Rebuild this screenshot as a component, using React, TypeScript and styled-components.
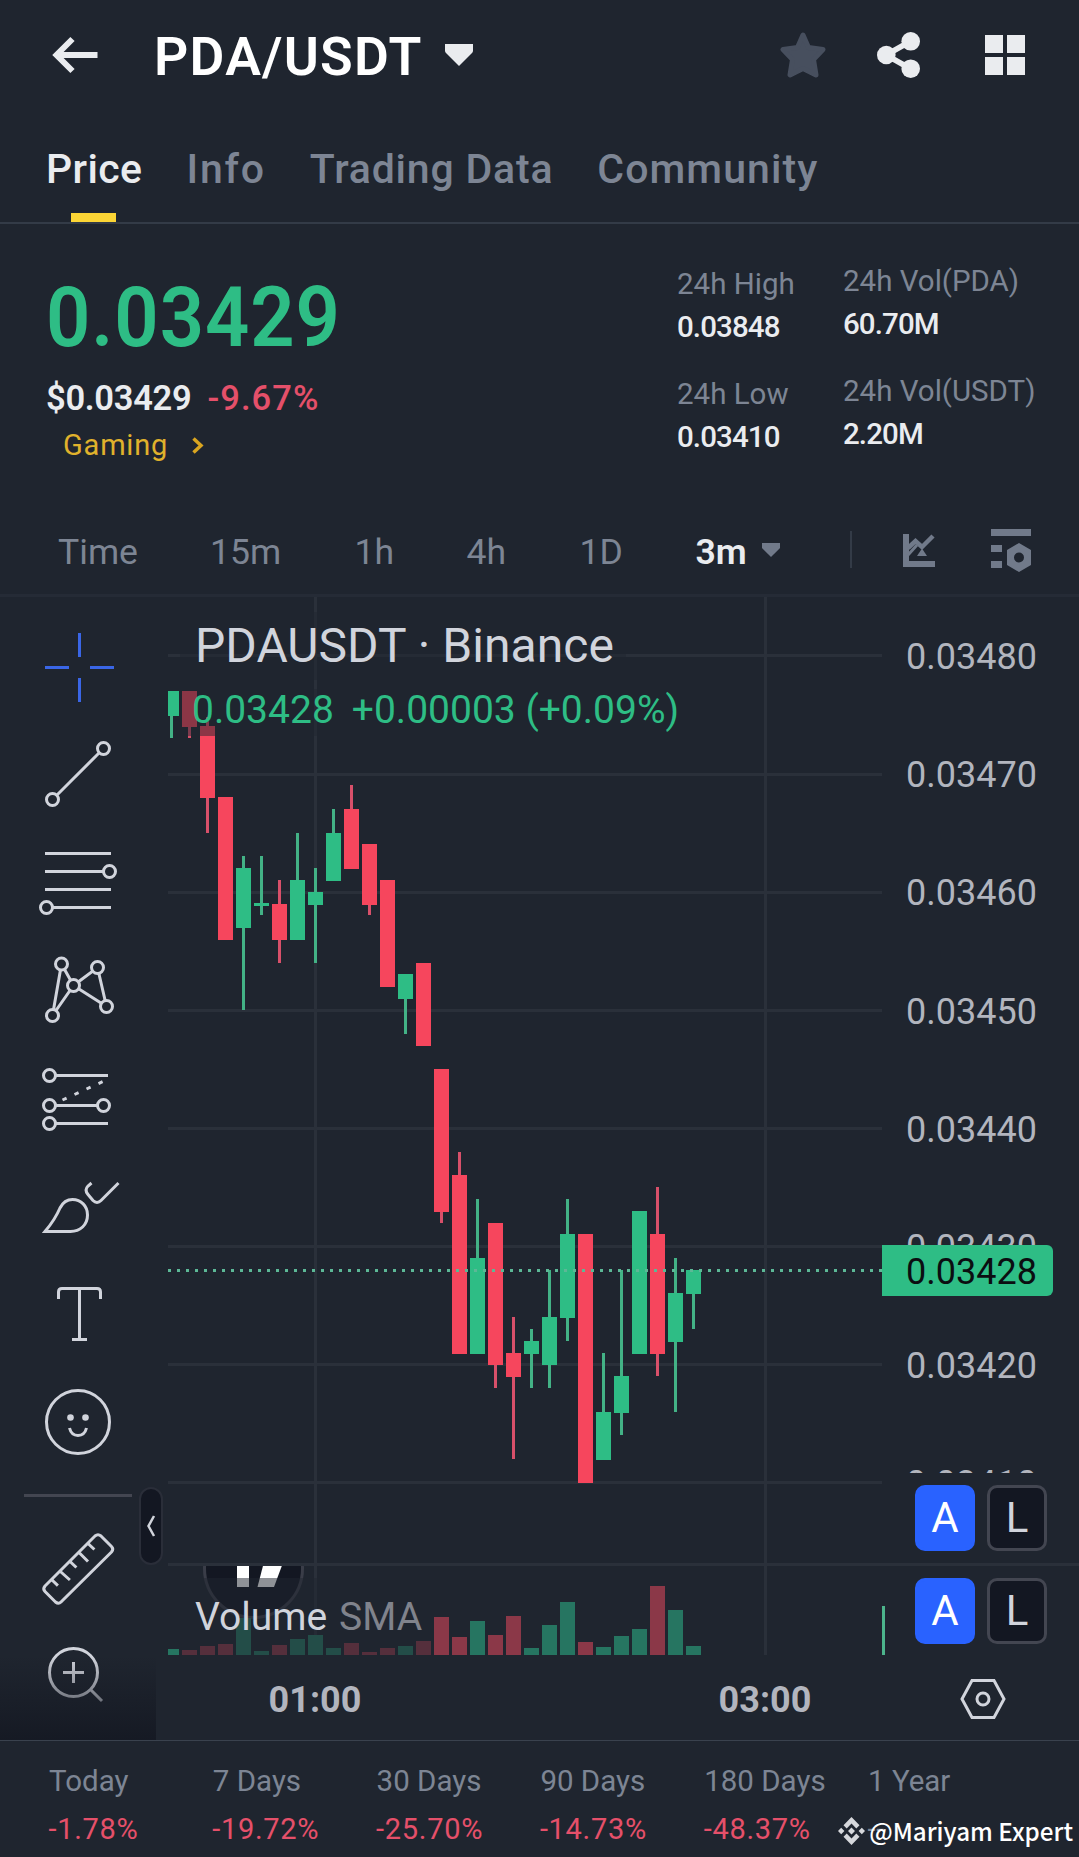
import React from "react";
import styled, { createGlobalStyle } from "styled-components";

const c = {
  bg: "#1f252f",
  line: "#333b47",
  grid: "#2a303a",
  muted: "#7d8594",
  text: "#eaecef",
  green: "#2ebd85",
  red: "#f6465d",
  redText: "#e5506a",
  icon: "#d1d4dc",
  axis: "#b2b5be",
  blue: "#2962ff",
  dark: "#131722",
};

const Global = createGlobalStyle`
  * { box-sizing: border-box; }
  body { margin: 0; background: ${c.bg}; }
`;

const Page = styled.div`
  width: 1079px;
  height: 1857px;
  overflow: hidden;
  background: ${c.bg};
  color: ${c.text};
  font-family: Roboto, "Liberation Sans", sans-serif;
  display: flex;
  flex-direction: column;
`;

/* ---------- header ---------- */
const Header = styled.header`
  height: 110px;
  display: flex;
  align-items: center;
  padding: 0 53px 0 52px;
`;
const Title = styled.h1`
  margin: 3px 0 0 56px;
  font-size: 53.5px;
  line-height: 60px;
  font-weight: 600;
  letter-spacing: 1.25px;
  color: #fff;
`;
const CaretBox = styled.span`
  display: flex;
  margin-left: 22px;
`;
const HeaderActions = styled.div`
  margin-left: auto;
  display: flex;
  align-items: center;
`;
const ActionSlot = styled.span<{ $gap: number }>`
  display: flex;
  margin-left: ${(p) => p.$gap}px;
  margin-top: -1px;
`;

/* ---------- tabs ---------- */
const Tabs = styled.nav`
  height: 114px;
  display: flex;
  gap: 44px;
  padding: 0 46px;
  border-bottom: 2px solid ${c.line};
`;
const Tab = styled.span<{ $active?: boolean; $ls?: number }>`
  position: relative;
  padding-top: 35px;
  font-size: 41px;
  line-height: 48px;
  font-weight: 500;
  letter-spacing: ${(p) => p.$ls ?? 0.4}px;
  color: ${(p) => (p.$active ? c.text : c.muted)};
  &::after {
    content: "";
    display: ${(p) => (p.$active ? "block" : "none")};
    position: absolute;
    left: calc(50% - 23px);
    bottom: 0;
    width: 45px;
    height: 9px;
    background: #fcd535;
  }
`;

/* ---------- summary ---------- */
const Summary = styled.section`
  height: 286px;
  display: flex;
  justify-content: space-between;
`;
const PriceCol = styled.div`
  padding: 52px 0 0 46px;
`;
const LastPrice = styled.div`
  font-size: 84px;
  line-height: 84px;
  font-weight: 600;
  letter-spacing: 1px;
  color: ${c.green};
  transform: scaleX(0.925);
  transform-origin: left;
`;
const SubRow = styled.div`
  display: flex;
  gap: 16px;
  margin-top: 18px;
  font-size: 34.5px;
  line-height: 40px;
  font-weight: 500;
`;
const Fiat = styled.span`
  font-weight: 600;
  letter-spacing: -0.3px;
`;
const Change = styled.span`
  color: ${c.redText};
  letter-spacing: 1.1px;
`;
const Category = styled.div`
  display: flex;
  align-items: center;
  gap: 24px;
  margin: 10px 0 0 17px;
  font-size: 29px;
  line-height: 34px;
  letter-spacing: 0.8px;
  color: #e0b22c;
`;
const Stats = styled.div`
  width: 402px;
  padding-top: 43px;
  display: grid;
  grid-template-columns: 166px auto;
`;
const StatCol = styled.dl<{ $lift?: boolean }>`
  margin: ${(p) => (p.$lift ? "-3.5px" : "0")} 0 0;
  font-size: 29.5px;
  line-height: 34px;
`;
const StatLabel = styled.dt`
  color: ${c.muted};
  white-space: nowrap;
`;
const StatValue = styled.dd`
  margin: 9px 0 33px;
  font-weight: 500;
  letter-spacing: -0.9px;
`;

/* ---------- interval bar ---------- */
const Intervals = styled.nav`
  height: 84px;
  padding: 0 46px 0 58px;
  display: grid;
  grid-template-columns: 152px 144.5px 112px 113px 116px 154.5px 53px 88px 40px;
  align-items: center;
  font-size: 35.6px;
  line-height: 42px;
  color: ${c.muted};
  & > svg {
    margin-top: -4px;
  }
`;
const ActiveInterval = styled.span`
  display: flex;
  align-items: center;
  gap: 15px;
  font-weight: 600;
  color: ${c.text};
  & > svg {
    margin-top: -4px;
  }
`;
const Divider = styled.i`
  width: 2px;
  height: 37px;
  margin-top: -5px;
  background: ${c.line};
`;

/* ---------- chart ---------- */
const ChartArea = styled.section`
  height: 1146px;
  display: grid;
  grid-template-columns: 168px 714px 197px;
  border-top: 3px solid #252b36;
`;
const Toolbar = styled.aside`
  position: relative;
  padding-top: 17px;
  display: flex;
  flex-direction: column;
  &::after {
    content: "";
    position: absolute;
    left: 0;
    bottom: 0;
    width: 156px;
    height: 84px;
    background: linear-gradient(rgba(24, 28, 38, 0), rgba(21, 25, 35, 0.95));
  }
`;
const ToolRule = styled.i`
  width: 108px;
  height: 3px;
  margin: 16px 0 18px 24px;
  background: #434651;
`;
const Collapse = styled.button`
  position: absolute;
  left: 139px;
  top: 890px;
  width: 24px;
  height: 78px;
  padding: 0;
  border: 2px solid #2a2e39;
  border-radius: 12px;
  background: ${c.dark};
  display: flex;
  align-items: center;
  justify-content: center;
`;
const Plot = styled.div`
  position: relative;
  display: flex;
  flex-direction: column;
`;
const Legend = styled.div<{ $top: number; $w: number; $h: number }>`
  position: absolute;
  left: 12px;
  top: ${(p) => p.$top}px;
  width: ${(p) => p.$w}px;
  height: ${(p) => p.$h}px;
  background: rgba(31, 37, 47, 0.5);
  white-space: nowrap;
`;
const SymbolName = styled.div`
  padding-left: 15px;
  font-size: 48px;
  line-height: 68px;
  letter-spacing: 0.05px;
  color: ${c.icon};
`;
const Quote = styled.div`
  display: flex;
  padding-left: 12px;
  font-size: 39px;
  line-height: 43px;
  color: ${c.green};
  gap: 18px;
`;
const VolumeName = styled.div`
  display: flex;
  gap: 12px;
  padding-left: 15px;
  font-size: 39px;
  line-height: 79px;
  color: ${c.icon};
`;
const Faded = styled.span`
  color: #80838c;
`;
const TimeAxis = styled.div`
  display: grid;
  grid-template-columns: 294px 606px;
  text-align: center;
  padding-top: 22px;
  font-size: 36px;
  line-height: 46px;
  font-weight: 700;
  color: ${c.axis};
`;
const Axis = styled.div`
  position: relative;
  display: flex;
  flex-direction: column;
`;
const AxisLabels = styled.ul`
  margin: 0;
  padding: 1px 0 0 24px;
  height: 876px;
  overflow: hidden;
  list-style: none;
  font-size: 36px;
  color: ${c.axis};
`;
const AxisLabel = styled.li`
  height: 118.2px;
  line-height: 118.2px;
`;
const PriceTag = styled.div`
  position: absolute;
  left: 0;
  top: 648px;
  width: 171px;
  height: 51px;
  padding-left: 24px;
  border-radius: 0 6px 6px 0;
  background: ${c.green};
  color: #0b0e11;
  font-size: 36px;
  line-height: 54px;
`;
const ScaleRow = styled.div<{ $mt: number }>`
  display: flex;
  gap: 12px;
  margin: ${(p) => p.$mt}px 0 0 33px;
`;
const ScaleButton = styled.button<{ $on?: boolean }>`
  width: 60px;
  height: 66px;
  padding: 0;
  border: 3px solid ${(p) => (p.$on ? c.blue : "#434651")};
  border-radius: 10px;
  background: ${(p) => (p.$on ? c.blue : c.dark)};
  color: ${(p) => (p.$on ? "#fff" : c.icon)};
  font-family: inherit;
  font-size: 42px;
  line-height: 58px;
`;
const PaneRule = styled.i`
  height: 3px;
  margin-top: 12px;
  background: ${c.grid};
`;
const LastVolume = styled.i`
  position: absolute;
  left: 0;
  top: 1009px;
  width: 3px;
  height: 49px;
  background: #4cb48c;
`;
const AxisSettings = styled.div`
  margin: 35px 0 0 78px;
  display: flex;
`;

/* ---------- footer ---------- */
const Footer = styled.footer`
  position: relative;
  flex: 1;
  border-top: 1px solid #3a424e;
  padding: 23px 0 0 49px;
  display: grid;
  grid-template-columns: repeat(5, 163.8px) auto;
  font-size: 29.5px;
  line-height: 34px;
`;
const Period = styled.div`
  white-space: nowrap;
  color: ${c.muted};
`;
const PeriodChange = styled.div<{ $none?: boolean }>`
  margin: 14px 0 0 -0.5px;
  font-size: 29px;
  letter-spacing: 0.7px;
  color: ${(p) => (p.$none ? c.muted : c.redText)};
`;
const Watermark = styled.div`
  position: absolute;
  right: 6px;
  bottom: 8px;
  display: flex;
  align-items: center;
  gap: 4px;
  font-family: "Noto Sans CJK SC", "Noto Sans", sans-serif;
  font-size: 24.2px;
  line-height: 36px;
  font-weight: 500;
  color: #fff;
`;

/* ---------- icons ---------- */
const Caret = ({ w, h, fill }: { w: number; h: number; fill: string }) => (
  <svg width={w} height={h} viewBox="0 0 28 22" preserveAspectRatio="none">
    <path d="M0 0H28V6.500Q28 8 27 9L14 22L1 9Q0 8 0 6.500Z" fill={fill} />
  </svg>
);

const Tool = ({ top, children }: { top: number; children: React.ReactNode }) => (
  <svg width="156" height="108" viewBox={`0 ${top} 156 108`} fill="none" stroke={c.icon} strokeWidth="3">
    {children}
  </svg>
);

const Dots = ({ at }: { at: [number, number][] }) => (
  <>
    {at.map(([x, y]) => (
      <circle key={`${x}-${y}`} cx={x} cy={y} r="6" fill={c.bg} />
    ))}
  </>
);

/* ---------- chart data: [up, high, bodyTop, bodyBottom, low, volumeTop] ---------- */
const bars: [number, number, number, number, number, number][] = [
  [1, 691, 691, 716, 738, 1649],
  [0, 691, 691, 727, 738, 1650],
  [0, 717, 726, 798, 833, 1646],
  [0, 797, 797, 940, 940, 1644],
  [1, 856, 868, 928, 1010, 1618],
  [1, 856, 903, 906, 915, 1651],
  [0, 880, 904, 940, 963, 1645],
  [1, 833, 880, 940, 940, 1639],
  [1, 868, 892, 905, 963, 1635],
  [1, 809, 833, 881, 881, 1648],
  [0, 785, 809, 869, 869, 1643],
  [0, 844, 844, 905, 915, 1652],
  [0, 880, 880, 987, 987, 1648],
  [1, 974, 974, 999, 1034, 1646],
  [0, 963, 963, 1046, 1046, 1641],
  [0, 1069, 1069, 1212, 1223, 1617],
  [0, 1152, 1175, 1354, 1354, 1637],
  [1, 1199, 1258, 1354, 1354, 1621],
  [0, 1223, 1223, 1365, 1388, 1635],
  [0, 1317, 1353, 1377, 1459, 1616],
  [1, 1329, 1341, 1354, 1388, 1648],
  [1, 1270, 1317, 1365, 1388, 1625],
  [1, 1199, 1234, 1318, 1341, 1602],
  [0, 1234, 1234, 1483, 1483, 1642],
  [1, 1353, 1412, 1460, 1460, 1647],
  [1, 1270, 1376, 1413, 1435, 1636],
  [1, 1211, 1211, 1354, 1354, 1629],
  [0, 1187, 1234, 1354, 1376, 1586],
  [1, 1258, 1293, 1342, 1412, 1610],
  [1, 1270, 1270, 1294, 1329, 1646],
];
const gridY = [654, 773, 891, 1009, 1127, 1245, 1363, 1481];
const prices = ["0.03480", "0.03470", "0.03460", "0.03450", "0.03440", "0.03430", "0.03420", "0.03410"];

const Chart = () => (
  <svg width="714" height="1058" viewBox="168 597 714 1058" shapeRendering="crispEdges">
    {gridY.map((y) => (
      <rect key={y} x="168" y={y} width="714" height="3" fill={c.grid} />
    ))}
    <rect x="168" y="1563" width="714" height="3" fill={c.grid} />
    {[314, 764].map((x) => (
      <rect key={x} x={x} y="597" width="3" height="1058" fill={c.grid} />
    ))}
    <svg x="168" y="1566" width="714" height="89" viewBox="168 1566 714 89">
      <circle cx="253.500" cy="1568.500" r="49" fill={c.dark} stroke="#3a3d48" strokeWidth="3" shapeRendering="auto" />
      <rect x="237" y="1560" width="12" height="27" fill="#fff" />
      <path d="M264.500 1560H284L274 1587H257.500Z" fill="#fff" shapeRendering="auto" />
    </svg>
    {bars.map(([up, high, top, bottom, low, vol], i) => {
      const x = 164 + i * 18;
      return (
        <g key={i}>
          <rect x={x} y={vol} width="15" height={1655 - vol} fill={up ? "#267561" : "#8b3848"} />
          <rect x={x + 6} y={high} width="3" height={low - high} fill={up ? "#43b286" : "#d8506a"} />
          <rect x={x} y={top} width="15" height={bottom - top} fill={up ? c.green : c.red} />
        </g>
      );
    })}
    <path d="M168 1270.500H882" stroke="#5cb896" strokeWidth="3" strokeDasharray="3 6" />
  </svg>
);

const Binance = () => (
  <svg width="27" height="28" viewBox="0 0 27 28" fill="#d6d8dc">
    <path d="M13.500 0L21.500 8.200L18.300 11.400L13.500 6.500L8.700 11.400L5.500 8.200Z" />
    <path d="M13.500 28L21.500 19.800L18.300 16.600L13.500 21.500L8.700 16.600L5.500 19.800Z" />
    <path d="M3.200 10.800L6.400 14L3.200 17.200L0 14ZM23.800 10.800L27 14L23.800 17.200L20.600 14ZM13.500 10.500L17 14L13.500 17.500L10 14Z" />
  </svg>
);

const periods = [
  ["Today", "-1.78%"],
  ["7 Days", "-19.72%"],
  ["30 Days", "-25.70%"],
  ["90 Days", "-14.73%"],
  ["180 Days", "-48.37%"],
  ["1 Year", "--"],
];

export default function App() {
  return (
    <Page>
      <Global />
      <Header>
        <svg width="46" height="38" viewBox="0 0 46 38" fill="none" stroke={c.text} strokeWidth="6">
          <path d="M45.500 19H5M20.500 3L4.500 19L20.500 35" />
        </svg>
        <Title>PDA/USDT</Title>
        <CaretBox>
          <Caret w={28} h={22} fill={c.text} />
        </CaretBox>
        <HeaderActions>
          <ActionSlot $gap={0}>
            <svg width="46" height="46" viewBox="0 0 46 46" fill="#474f5e" stroke="#474f5e" strokeWidth="5" strokeLinejoin="round">
              <path d="M23 3L28.500 15.500L43 17.500L33.500 27.500L36 43L23 36.500L10 43L12.500 27.500L3 17.500L17.500 15.500Z" />
            </svg>
          </ActionSlot>
          <ActionSlot $gap={51}>
            <svg width="43" height="46" viewBox="0 0 43 46" fill={c.text}>
              <path d="M34 9L9 23L34 37" fill="none" stroke={c.text} strokeWidth="5.500" />
              <circle cx="9.300" cy="23" r="9.300" />
              <circle cx="33.700" cy="9.300" r="9.300" />
              <circle cx="33.700" cy="36.700" r="9.300" />
            </svg>
          </ActionSlot>
          <ActionSlot $gap={65}>
            <svg width="41" height="40" viewBox="0 0 41 40" fill={c.text}>
              <path d="M0 0H18V18H0ZM22 0H40V18H22ZM0 22H18V40H0ZM22 22H40V40H22Z" />
            </svg>
          </ActionSlot>
        </HeaderActions>
      </Header>

      <Tabs>
        <Tab $active>Price</Tab>
        <Tab $ls={1.8}>Info</Tab>
        <Tab $ls={0.8}>Trading Data</Tab>
        <Tab $ls={1.1}>Community</Tab>
      </Tabs>

      <Summary>
        <PriceCol>
          <LastPrice>0.03429</LastPrice>
          <SubRow>
            <Fiat>$0.03429</Fiat>
            <Change>-9.67%</Change>
          </SubRow>
          <Category>
            Gaming
            <svg width="12" height="17" viewBox="0 0 12 17" fill="none" stroke="#d9a520" strokeWidth="3.500">
              <path d="M1.500 1.500L9 8.500L1.500 15.500" />
            </svg>
          </Category>
        </PriceCol>
        <Stats>
          <StatCol>
            <StatLabel>24h High</StatLabel>
            <StatValue>0.03848</StatValue>
            <StatLabel>24h Low</StatLabel>
            <StatValue>0.03410</StatValue>
          </StatCol>
          <StatCol $lift>
            <StatLabel>24h Vol(PDA)</StatLabel>
            <StatValue>60.70M</StatValue>
            <StatLabel>24h Vol(USDT)</StatLabel>
            <StatValue>2.20M</StatValue>
          </StatCol>
        </Stats>
      </Summary>

      <Intervals>
        <span>Time</span>
        <span>15m</span>
        <span>1h</span>
        <span>4h</span>
        <span>1D</span>
        <ActiveInterval>
          3m
          <Caret w={18} h={14} fill="#717a8a" />
        </ActiveInterval>
        <Divider />
        <svg width="32" height="33" viewBox="0 0 32 33" fill="none" stroke="#717a8a">
          <path d="M3 0V30H32" strokeWidth="6" />
          <path d="M5 14L12.500 7L19 13L30 2" strokeWidth="4.500" />
          <path d="M19 14.500L24 22H14Z" fill="#717a8a" stroke="none" />
          <path d="M5 21L14 11" strokeWidth="3" />
        </svg>
        <svg width="40" height="43" viewBox="0 0 40 43" fill="#717a8a">
          <path d="M0 0H40V7H0ZM0 16H11V23H0ZM0 32H11V39H0Z" />
          <path fillRule="evenodd" d="M28 14L40 21V36L28 43L16 36V21ZM28 23.500A5 5 0 1 0 28 33.500A5 5 0 1 0 28 23.500Z" />
        </svg>
      </Intervals>

      <ChartArea>
        <Toolbar>
          <Tool top={614}>
            <path stroke="#3a66e6" d="M79.500 633V657M79.500 678V702M45 667.500H69M90 667.500H114" />
          </Tool>
          <Tool top={722}>
            <path d="M52.500 799.500L103.500 748.500" />
            <Dots at={[[52.5, 799.5], [103.5, 748.5]]} />
          </Tool>
          <Tool top={830}>
            <path d="M45 853.500H111M45 871.500H109M45 889.500H111M46 907.500H111" />
            <Dots at={[[109.5, 871.5], [46.5, 907.5]]} />
          </Tool>
          <Tool top={938}>
            <path d="M52.500 1015.500L61.500 964L73.500 985.500L97.500 967.500L106.500 1006.500L73.500 985.500Z" />
            <Dots at={[[61.5, 964], [97.5, 967.5], [73.5, 985.5], [106.5, 1006.5], [52.5, 1015.5]]} />
          </Tool>
          <Tool top={1046}>
            <path d="M49.500 1075.500H108M49.500 1105.500H103M49.500 1123.500H108" />
            <path d="M62.500 1100L104 1081" strokeDasharray="4.500 8.700" />
            <Dots at={[[49.5, 1075.5], [49.5, 1105.5], [103.5, 1105.5], [49.5, 1123.5]]} />
          </Tool>
          <Tool top={1154}>
            <path d="M45 1231.500C53 1222 57 1215 60 1208C63 1202 67 1199.500 72.500 1199.500C81 1199.500 87.500 1206 87.500 1215C87.500 1225 80 1231.500 70.500 1231.500Z" />
            <path d="M91.500 1183L88 1186C85.500 1188.500 85.500 1191.500 88 1194.500L93 1200.500C95.500 1203 98.500 1203 101 1200.500L118.500 1183" />
          </Tool>
          <Tool top={1262}>
            <path d="M58.500 1299V1292Q58.500 1288.500 62 1288.500H97Q100.500 1288.500 100.500 1292V1299M79.500 1288.500V1339.500M72 1339.500H87" />
          </Tool>
          <Tool top={1370}>
            <circle cx="78" cy="1422" r="31.500" />
            <path d="M69.500 1428C72 1438 84 1438 86.500 1428" />
            <circle cx="70.500" cy="1417.500" r="3.300" fill={c.icon} stroke="none" />
            <circle cx="85.500" cy="1417.500" r="3.300" fill={c.icon} stroke="none" />
          </Tool>
          <ToolRule />
          <Tool top={1515}>
            <path strokeLinejoin="round" d="M95 1536L45 1586Q42.500 1589 45 1591.500L55.500 1602Q58.500 1604.500 61 1602L111.500 1552Q114 1549 111.500 1546.500L101 1536Q98 1533.500 95 1536ZM51.500 1579.500L57.900 1585.700M59.800 1571L69.900 1580M69.500 1561L76.400 1567.500M78.500 1552L88 1561.500M87.500 1543L94.400 1549.500" />
          </Tool>
          <Tool top={1623}>
            <circle cx="73.500" cy="1672.500" r="24" />
            <path d="M63 1672.500H84M73.500 1662V1683M90.500 1689.500L102 1701" />
          </Tool>
          <Collapse>
            <svg width="10" height="22" viewBox="0 0 10 22" fill="none" stroke={c.icon} strokeWidth="2.500">
              <path d="M8 1L2.500 11L8 21" />
            </svg>
          </Collapse>
        </Toolbar>

        <Plot>
          <Chart />
          <Legend $top={15} $w={446} $h={68}>
            <SymbolName>PDAUSDT · Binance</SymbolName>
          </Legend>
          <Legend $top={92} $w={510} $h={47}>
            <Quote>
              <span>0.03428</span>
              <span>+0.00003 (+0.09%)</span>
            </Quote>
          </Legend>
          <Legend $top={981} $w={252} $h={77}>
            <VolumeName>
              Volume <Faded>SMA</Faded>
            </VolumeName>
          </Legend>
          <TimeAxis>
            <span>01:00</span>
            <span>03:00</span>
          </TimeAxis>
        </Plot>

        <Axis>
          <AxisLabels>
            {prices.map((p) => (
              <AxisLabel key={p}>{p}</AxisLabel>
            ))}
          </AxisLabels>
          <PriceTag>0.03428</PriceTag>
          <LastVolume />
          <ScaleRow $mt={12}>
            <ScaleButton $on>A</ScaleButton>
            <ScaleButton>L</ScaleButton>
          </ScaleRow>
          <PaneRule />
          <ScaleRow $mt={12}>
            <ScaleButton $on>A</ScaleButton>
            <ScaleButton>L</ScaleButton>
          </ScaleRow>
          <AxisSettings>
            <svg width="46" height="40" viewBox="0 0 46 40" fill="none" stroke={c.icon} strokeWidth="3">
              <path d="M12 1.500H34L44 20L34 38.500H12L2 20Z" />
              <circle cx="23" cy="20" r="6" />
            </svg>
          </AxisSettings>
        </Axis>
      </ChartArea>

      <Footer>
        {periods.map(([label, value]) => (
          <Period key={label}>
            {label}
            <PeriodChange $none={value === "--"}>{value}</PeriodChange>
          </Period>
        ))}
        <Watermark>
          <Binance />
          @Mariyam Expert
        </Watermark>
      </Footer>
    </Page>
  );
}
